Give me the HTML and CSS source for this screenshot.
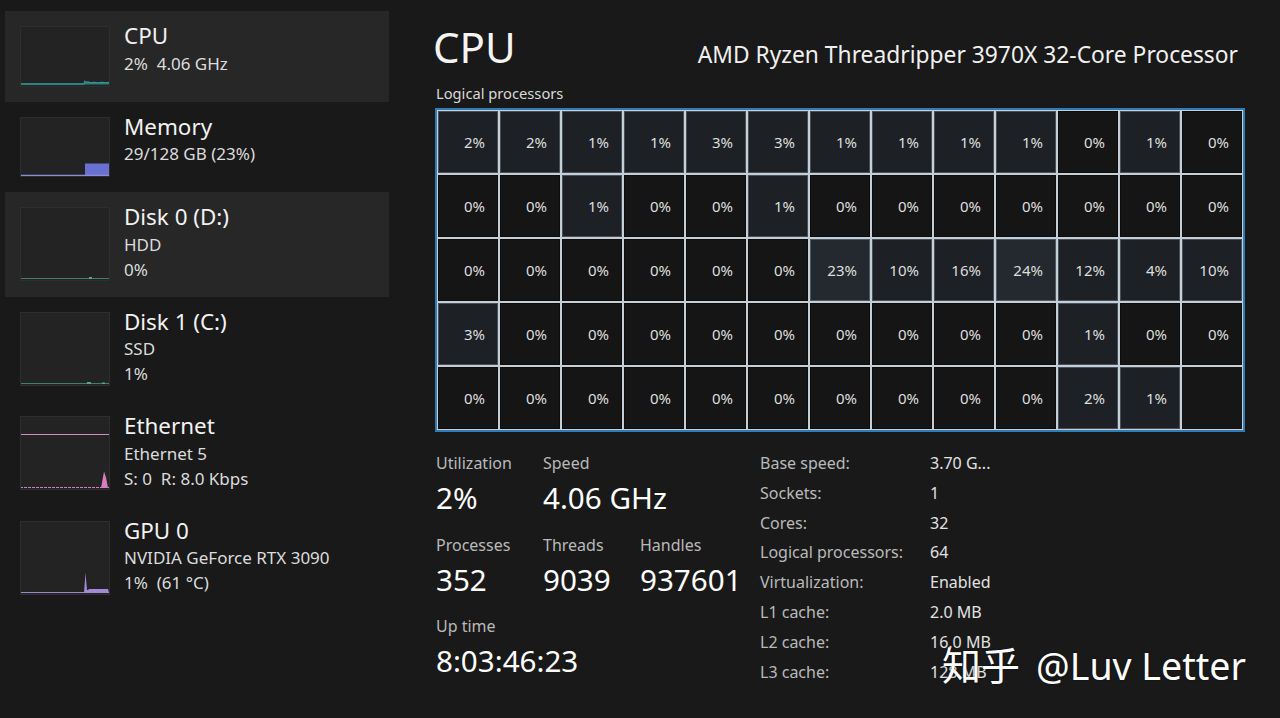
FILE: index.html
```html
<!DOCTYPE html>
<html lang="en">
<head>
<meta charset="utf-8">
<title>Task Manager - CPU</title>
<link rel="stylesheet" href="styles.css">
</head>
<body>
<div class="app">
  <aside class="sidebar">
    <div class="item selected">
      <div class="thumb short">
        <svg width="90" height="61" viewBox="0 0 90 61"><polyline points="0,58 64,58 65,55.5 66,56.5 68,56 70,57 74,56.5 78,57 82,56.5 86,57 90,56.5" fill="none" stroke="#36a3a3" stroke-width="1.5"/><polygon points="64,58.5 65,55.5 66,56.5 68,56 70,57 74,56.5 78,57 82,56.5 86,57 90,56.5 90,58.5" fill="#2a7f80"/></svg>
      </div>
      <div class="text">
        <div class="title">CPU</div>
        <div class="sub">2%&nbsp; 4.06 GHz</div>
      </div>
    </div>
    <div class="item">
      <div class="thumb short">
        <svg width="90" height="61" viewBox="0 0 90 61"><rect x="65" y="46.5" width="24" height="12" fill="#6a70d2"/><line x1="0" y1="58.5" x2="90" y2="58.5" stroke="#8a8ed8" stroke-width="1.5"/></svg>
      </div>
      <div class="text">
        <div class="title">Memory</div>
        <div class="sub">29/128 GB (23%)</div>
      </div>
    </div>
    <div class="item selected">
      <div class="thumb">
        <svg width="90" height="74" viewBox="0 0 90 74"><line x1="0" y1="71.5" x2="90" y2="71.5" stroke="#3f7f6c" stroke-width="1.2"/><rect x="69" y="70" width="3" height="2" fill="#5aa58a"/></svg>
      </div>
      <div class="text">
        <div class="title">Disk 0 (D:)</div>
        <div class="sub">HDD</div>
        <div class="sub">0%</div>
      </div>
    </div>
    <div class="item">
      <div class="thumb">
        <svg width="90" height="74" viewBox="0 0 90 74"><line x1="0" y1="71.5" x2="90" y2="71.5" stroke="#3f7f6c" stroke-width="1.2"/><rect x="67" y="70" width="4" height="2" fill="#5aa58a"/><rect x="82" y="70.5" width="3" height="1.5" fill="#5aa58a"/></svg>
      </div>
      <div class="text">
        <div class="title">Disk 1 (C:)</div>
        <div class="sub">SSD</div>
        <div class="sub">1%</div>
      </div>
    </div>
    <div class="item">
      <div class="thumb">
        <svg width="90" height="74" viewBox="0 0 90 74"><line x1="0" y1="18.5" x2="90" y2="18.5" stroke="#d488c4" stroke-width="1"/><line x1="0" y1="71.5" x2="90" y2="71.5" stroke="#cf7fbf" stroke-width="1.2" stroke-dasharray="3 1"/><polygon points="81,72 84,55.5 86,61.5 88,72" fill="#d77ec3"/></svg>
      </div>
      <div class="text">
        <div class="title">Ethernet</div>
        <div class="sub">Ethernet 5</div>
        <div class="sub">S: 0&nbsp; R: 8.0 Kbps</div>
      </div>
    </div>
    <div class="item">
      <div class="thumb">
        <svg width="90" height="74" viewBox="0 0 90 74"><line x1="0" y1="71.5" x2="90" y2="71.5" stroke="#9b88cf" stroke-width="1.2"/><polygon points="64,72 65.5,51.5 67,69 68,69 69,68 88,68 89,72" fill="#a28ad6"/></svg>
      </div>
      <div class="text">
        <div class="title">GPU 0</div>
        <div class="sub">NVIDIA GeForce RTX 3090</div>
        <div class="sub">1%&nbsp; (61 °C)</div>
      </div>
    </div>
  </aside>

  <main class="main">
    <header class="head">
      <h1 class="head-title">CPU</h1>
      <div class="head-model">AMD Ryzen Threadripper 3970X 32-Core Processor</div>
    </header>
    <div class="grid-label">Logical processors</div>
    <div class="grid">
      <div class="cell on">2%</div><div class="cell on">2%</div><div class="cell on">1%</div><div class="cell on">1%</div><div class="cell on">3%</div><div class="cell on">3%</div><div class="cell on">1%</div><div class="cell on">1%</div><div class="cell on">1%</div><div class="cell on">1%</div><div class="cell">0%</div><div class="cell on">1%</div><div class="cell">0%</div>
      <div class="cell">0%</div><div class="cell">0%</div><div class="cell on">1%</div><div class="cell">0%</div><div class="cell">0%</div><div class="cell on">1%</div><div class="cell">0%</div><div class="cell">0%</div><div class="cell">0%</div><div class="cell">0%</div><div class="cell">0%</div><div class="cell">0%</div><div class="cell">0%</div>
      <div class="cell">0%</div><div class="cell">0%</div><div class="cell">0%</div><div class="cell">0%</div><div class="cell">0%</div><div class="cell">0%</div><div class="cell hi">23%</div><div class="cell on">10%</div><div class="cell on">16%</div><div class="cell hi">24%</div><div class="cell on">12%</div><div class="cell on">4%</div><div class="cell on">10%</div>
      <div class="cell on">3%</div><div class="cell">0%</div><div class="cell">0%</div><div class="cell">0%</div><div class="cell">0%</div><div class="cell">0%</div><div class="cell">0%</div><div class="cell">0%</div><div class="cell">0%</div><div class="cell">0%</div><div class="cell on">1%</div><div class="cell">0%</div><div class="cell">0%</div>
      <div class="cell">0%</div><div class="cell">0%</div><div class="cell">0%</div><div class="cell">0%</div><div class="cell">0%</div><div class="cell">0%</div><div class="cell">0%</div><div class="cell">0%</div><div class="cell">0%</div><div class="cell">0%</div><div class="cell on">2%</div><div class="cell on">1%</div><div class="cell empty"></div>
    </div>

    <section class="stats">
      <div class="dyn">
        <div class="stat"><div class="lbl">Utilization</div><div class="val">2%</div></div>
        <div class="stat span2"><div class="lbl">Speed</div><div class="val">4.06 GHz</div></div>
        <div class="stat"><div class="lbl">Processes</div><div class="val">352</div></div>
        <div class="stat"><div class="lbl">Threads</div><div class="val">9039</div></div>
        <div class="stat"><div class="lbl">Handles</div><div class="val">937601</div></div>
        <div class="stat span3"><div class="lbl">Up time</div><div class="val">8:03:46:23</div></div>
      </div>
      <dl class="spec">
        <dt>Base speed:</dt><dd>3.70 G...</dd>
        <dt>Sockets:</dt><dd>1</dd>
        <dt>Cores:</dt><dd>32</dd>
        <dt>Logical processors:</dt><dd>64</dd>
        <dt>Virtualization:</dt><dd>Enabled</dd>
        <dt>L1 cache:</dt><dd>2.0 MB</dd>
        <dt>L2 cache:</dt><dd>16.0 MB</dd>
        <dt>L3 cache:</dt><dd>128 MB</dd>
      </dl>
    </section>
  </main>
</div>
<div class="watermark"><span class="wm-cjk">知乎</span><span class="wm-lat">@Luv Letter</span></div>
</body>
</html>
```

FILE: styles.css
```css
* { box-sizing: border-box; }
html, body { margin: 0; padding: 0; }
body {
  width: 1280px;
  height: 718px;
  overflow: hidden;
  background: #191919;
  color: #ffffff;
  font-family: "Noto Sans", "Open Sans", sans-serif;
  position: relative;
}
.app {
  display: flex;
  height: 100%;
}
.sidebar {
  width: 395px;
  padding: 11px 0 0 5px;
  display: flex;
  flex-direction: column;
}
.item {
  width: 384px;
  display: flex;
  align-items: flex-start;
  padding: 15px 15px;
}
.item.selected { background: #272727; }
.thumb {
  width: 90px;
  height: 74px;
  background: #232323;
  border: 1px solid #2e2e2e;
  flex: none;
  position: relative;
  overflow: hidden;
}
.thumb.short { height: 60.5px; }
.thumb svg { display: block; position: absolute; left: -1px; top: -1px; }
.text {
  margin-left: 14px;
  margin-top: -3px;
}
.title {
  font-size: 22.4px;
  line-height: 26px;
  margin-bottom: 1.5px;
  color: #f2f2f2;
}
.sub {
  font-size: 17px;
  line-height: 25px;
  color: #dcdcdc;
}

.main {
  flex: 1;
  padding-left: 40px;
  display: flex;
  flex-direction: column;
}
.head {
  width: 810px;
  margin-top: 22px;
  display: flex;
  justify-content: space-between;
  align-items: baseline;
  padding-right: 7px;
}
.head-title {
  margin: 0;
  font-weight: 400;
  font-size: 42px;
  line-height: 50px;
  margin-left: -2px;
  color: #f4f4f4;
}
.head-model {
  font-size: 22.8px;
  color: #f0f0f0;
}
.grid-label {
  margin-top: 12px;
  font-size: 14.7px;
  line-height: 18px;
  color: #d8d8d8;
  margin-left: 1px;
}
.grid {
  margin-top: 6px;
  width: 810px;
  display: grid;
  grid-template-columns: repeat(13, 60px);
  grid-auto-rows: 62px;
  gap: 2px;
  padding: 1px;
  border: 2px solid #2f7cb6;
  background: #c6ced6;
}
.cell {
  background: #151515;
  box-shadow: inset 0 0 0 1px #0d0d0d;
  display: flex;
  align-items: center;
  justify-content: flex-end;
  padding-right: 13px;
  padding-bottom: 1px;
  font-size: 15px;
  color: #dedede;
}
.cell.on {
  background: #1d2125;
  box-shadow: inset 0 0 0 1px #46515c;
}
.cell.hi {
  background: #23292e;
  box-shadow: inset 0 0 0 1px #4c5966;
}
.cell.empty { background: #161616; box-shadow: none; }

.stats {
  margin-top: 20px;
  display: flex;
  align-items: flex-start;
}
.dyn {
  width: 325px;
  display: grid;
  grid-template-columns: 107px 97px auto;
  margin-left: 1px;
}
.stat { margin-bottom: 17.5px; }
.span2 { grid-column: span 2; }
.span3 { grid-column: span 3; }
.lbl {
  font-size: 16px;
  line-height: 22px;
  color: #b9b9b9;
  margin-bottom: 6px;
}
.val {
  font-size: 29.6px;
  line-height: 36px;
  color: #ffffff;
}
.spec {
  margin: -3px 0 0 -1px;
  display: grid;
  grid-template-columns: 170px auto;
  align-content: start;
  font-size: 16px;
  line-height: 29.8px;
}
.spec dt { color: #b9b9b9; }
.spec dd { margin: 0; color: #e2e2e2; }

.watermark {
  position: absolute;
  left: 942px;
  top: 638px;
  display: flex;
  align-items: baseline;
  gap: 16px;
  color: #ffffff;
  text-shadow: 0 0 2px rgba(0,0,0,0.6);
  white-space: nowrap;
}
.wm-cjk {
  font-family: "Noto Sans CJK SC", sans-serif;
  font-size: 39px;
  line-height: 50px;
}
.wm-lat {
  font-family: "Noto Sans", sans-serif;
  font-size: 37.5px;
  line-height: 50px;
}
```
